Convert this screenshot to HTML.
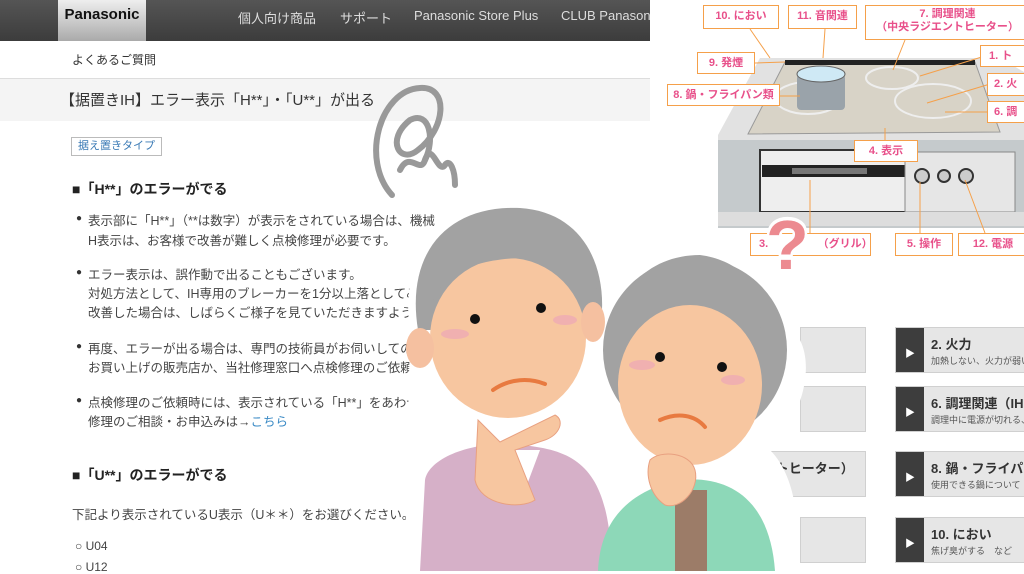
<!DOCTYPE html>
<html><head><meta charset="utf-8"><style>
*{margin:0;padding:0;box-sizing:border-box}
body{width:1024px;height:571px;overflow:hidden;background:#fff;font-family:"Liberation Sans","Noto Sans CJK JP",sans-serif;color:#333;position:relative}
.a{position:absolute;white-space:nowrap}
.hdr{left:0;top:0;width:650px;height:41px;background:linear-gradient(#555,#3c3c3c)}
.logo{left:58px;top:0;width:88px;height:41px;background:linear-gradient(#eee,#aaa);font-weight:bold;font-size:15px;color:#111;text-align:center;line-height:30px}
.nav{top:8px;font-size:13px;color:#ddd}
.band{left:0;top:78px;width:650px;height:43px;background:#f4f4f4;border-top:1px solid #ddd}
.b{font-size:12.5px;color:#444;left:88px}
.dot{left:76px;font-size:10px}
.lbl{position:absolute;border:1.5px solid #f5a04a;background:#fff;color:#e8508a;font-weight:bold;font-size:11px;text-align:center;white-space:nowrap;line-height:1.2;padding-top:4px;overflow:hidden}
.bx{position:absolute;background:#e6e6e6;border:1px solid #d0d0d0}
.dk{position:absolute;left:0;top:0;bottom:0;width:28px;background:#3d3d3d;color:#fff;font-size:10px;text-align:center;padding-top:17px}
.bt{position:absolute;left:35px;top:6px;font-weight:bold;font-size:13px;color:#333;white-space:nowrap}
.bs{position:absolute;left:35px;top:26px;font-size:9px;color:#555;white-space:nowrap}
</style></head><body>
<div class="a hdr"></div>
<div class="a logo">Panasonic</div>
<div class="a nav" style="left:238px">個人向け商品</div>
<div class="a nav" style="left:340px">サポート</div>
<div class="a nav" style="left:414px">Panasonic Store Plus</div>
<div class="a nav" style="left:561px">CLUB Panasonic</div>
<div class="a" style="left:72px;top:51px;font-size:12px;color:#333">よくあるご質問</div>
<div class="a band"></div>
<div class="a" style="left:60px;top:89px;font-size:15px;color:#333">【据置きIH】エラー表示「H**」・「U**」が出る</div>
<div class="a" style="left:71px;top:137px;width:91px;height:19px;border:1px solid #bbb;font-size:11px;color:#3a7ab5;text-align:center;line-height:17px">据え置きタイプ</div>
<div class="a" style="left:72px;top:179px;font-size:14px;font-weight:bold;color:#222">■「H**」のエラーがでる</div>
<div class="a dot" style="top:213px">●</div>
<div class="a b" style="top:210px">表示部に「H**」（**は数字）が表示をされている場合は、機械　　　　　　　　　　　　　　　　　　　ています。</div>
<div class="a b" style="top:230px">H表示は、お客様で改善が難しく点検修理が必要です。</div>
<div class="a dot" style="top:267px">●</div>
<div class="a b" style="top:264px">エラー表示は、誤作動で出ることもございます。</div>
<div class="a b" style="top:283px">対処方法として、IH専用のブレーカーを1分以上落としてみて</div>
<div class="a b" style="top:302px">改善した場合は、しばらくご様子を見ていただきますようお願</div>
<div class="a dot" style="top:341px">●</div>
<div class="a b" style="top:338px">再度、エラーが出る場合は、専門の技術員がお伺いしての点</div>
<div class="a b" style="top:357px">お買い上げの販売店か、当社修理窓口へ点検修理のご依頼を。</div>
<div class="a dot" style="top:395px">●</div>
<div class="a b" style="top:392px">点検修理のご依頼時には、表示されている「H**」をあわせてお伝え</div>
<div class="a b" style="top:411px">修理のご相談・お申込みは→<span style="color:#3a8ac5">こちら</span></div>
<div class="a" style="left:72px;top:465px;font-size:14px;font-weight:bold;color:#222">■「U**」のエラーがでる</div>
<div class="a" style="left:72px;top:504px;font-size:12.5px;color:#444">下記より表示されているU表示（U＊＊）をお選びください。</div>
<div class="a" style="left:75px;top:539px;font-size:12px;color:#444">○ U04</div>
<div class="a" style="left:75px;top:560px;font-size:12px;color:#444">○ U12</div>

<!-- right list -->
<div class="bx" style="left:800px;top:327px;width:66px;height:46px"></div>
<div class="bx" style="left:800px;top:386px;width:66px;height:46px"></div>
<div class="bx" style="left:700px;top:451px;width:166px;height:46px"><div class="bt" style="left:10px">央ラジエントヒーター）</div><div class="bs" style="left:12px">　　など</div></div>
<div class="bx" style="left:800px;top:517px;width:66px;height:46px"></div>
<div class="bx" style="left:895px;top:327px;width:140px;height:46px"><div class="dk">▶</div><div class="bt">2. 火力</div><div class="bs">加熱しない、火力が弱い</div></div>
<div class="bx" style="left:895px;top:386px;width:140px;height:46px"><div class="dk">▶</div><div class="bt">6. 調理関連（IH</div><div class="bs">調理中に電源が切れる、</div></div>
<div class="bx" style="left:895px;top:451px;width:140px;height:46px"><div class="dk">▶</div><div class="bt">8. 鍋・フライパ</div><div class="bs">使用できる鍋について</div></div>
<div class="bx" style="left:895px;top:517px;width:140px;height:46px"><div class="dk">▶</div><div class="bt">10. におい</div><div class="bs">焦げ臭がする　など</div></div>

<svg class="a" style="left:0;top:0" width="1024" height="571" viewBox="0 0 1024 571">
<!-- stove -->
<rect x="650" y="0" width="374" height="228" fill="#fff"/>
<polygon points="760,58 1000,58 1024,72 1024,140 718,140 718,135" fill="#e2e2e2"/>
<polygon points="785,62 975,62 1000,132 748,134" fill="#d8d3c7" stroke="#999"/>
<rect x="785" y="60" width="190" height="5" fill="#222"/>
<ellipse cx="808" cy="98" rx="33" ry="16" fill="none" stroke="#eee" stroke-width="2"/>
<ellipse cx="892" cy="78" rx="26" ry="11" fill="none" stroke="#eee" stroke-width="2"/>
<ellipse cx="933" cy="101" rx="38" ry="17" fill="none" stroke="#eee" stroke-width="2"/>
<rect x="718" y="140" width="306" height="88" fill="#c5cacc"/>
<rect x="760" y="150" width="150" height="62" fill="#eee" stroke="#333" stroke-width="2"/>
<rect x="762" y="165" width="145" height="12" fill="#222"/>
<rect x="792" y="168" width="75" height="6" fill="#777"/>
<rect x="905" y="152" width="110" height="60" fill="#e6e6e6" stroke="#888"/>
<circle cx="922" cy="176" r="7" fill="#ccc" stroke="#333" stroke-width="2"/>
<circle cx="944" cy="176" r="6" fill="#ccc" stroke="#333" stroke-width="2"/>
<circle cx="966" cy="176" r="7" fill="#ccc" stroke="#333" stroke-width="2"/>
<rect x="718" y="212" width="306" height="14" fill="#ddd"/>
<!-- pot -->
<rect x="797" y="74" width="48" height="36" rx="4" fill="#9aa3aa"/>
<ellipse cx="821" cy="74" rx="24" ry="8" fill="#cfe9f5" stroke="#666"/>
<!-- leader lines -->
<g stroke="#f5a04a" stroke-width="1" fill="none">
<path d="M750 29 L770 58 M825 29 L823 58 M905 40 L893 70 M755 63 L785 62 M780 96 L800 96 M985 56 L920 76 M990 84 L927 103 M990 112 L945 112 M885 140 L885 128 M810 233 L810 180 M920 233 L920 182 M985 233 L965 180"/>
</g>
<!-- question mark -->
<text x="766" y="268" font-size="70" font-weight="bold" fill="#ec8a90" stroke="#fff" stroke-width="5" paint-order="stroke" font-family="Liberation Sans,sans-serif">?</text>
<!-- scribble -->
<g fill="none" stroke="#999" stroke-width="6" stroke-linecap="round">
<path d="M392 195 C360 160 380 90 420 88 C450 86 445 130 418 150 C400 165 385 140 410 120 C430 110 435 140 425 160"/>
<path d="M400 170 C410 150 420 175 425 160 C432 140 438 175 445 165 C450 158 455 170 455 185"/>
</g>
<!-- white outlines -->
<path d="M405 560 L410 330 C400 270 430 200 510 198 C580 196 620 240 612 300 L640 270 C700 230 790 250 800 340 C815 370 800 420 770 450 C800 480 800 540 795 571 L400 571Z" fill="#fff"/>
<!-- man -->
<path d="M420 571 L425 480 C430 455 480 440 520 445 C580 450 610 470 612 571Z" fill="#d6b0c8"/>
<path d="M500 450 L525 490 L540 450Z" fill="#fff"/>
<path d="M418 330 C405 250 450 205 520 208 C585 212 610 270 600 330Z" fill="#a2a2a2"/>
<ellipse cx="508" cy="338" rx="78" ry="80" fill="#f7c6a0"/>
<path d="M430 310 C440 270 480 255 550 258 C575 270 590 290 592 315 L598 280 C590 230 550 210 510 210 C460 212 420 250 430 310Z" fill="#a2a2a2"/>
<ellipse cx="420" cy="348" rx="14" ry="20" fill="#f5c0a0"/>
<ellipse cx="593" cy="322" rx="12" ry="20" fill="#f5c0a0"/>
<circle cx="475" cy="319" r="5" fill="#111"/><circle cx="541" cy="308" r="5" fill="#111"/>
<ellipse cx="455" cy="334" rx="14" ry="5" fill="#f0b0b0"/><ellipse cx="565" cy="320" rx="12" ry="5" fill="#f0b0b0"/>
<path d="M493 390 C510 378 530 378 545 384" stroke="#e87a40" stroke-width="4" fill="none" stroke-linecap="round"/>
<path d="M478 420 L500 442 L555 415 C565 420 560 435 545 440 L515 450 L535 500 C520 510 480 505 475 480Z" fill="#f7c6a0" stroke="#e8a080"/>
<!-- woman -->
<path d="M598 571 C600 520 630 490 680 480 C730 475 770 500 775 571Z" fill="#8dd8b8"/>
<rect x="675" y="490" width="32" height="81" fill="#9c7c68"/>
<circle cx="695" cy="350" r="92" fill="#a2a2a2"/>
<ellipse cx="690" cy="385" rx="72" ry="80" fill="#f7c6a0"/>
<path d="M610 340 C630 290 700 270 740 300 L760 330 C770 290 740 260 700 255 C650 255 615 290 610 340Z" fill="#a2a2a2"/>
<circle cx="660" cy="357" r="5" fill="#111"/><circle cx="722" cy="367" r="5" fill="#111"/>
<ellipse cx="642" cy="365" rx="13" ry="5" fill="#f0b0b0"/><ellipse cx="733" cy="380" rx="12" ry="5" fill="#f0b0b0"/>
<path d="M660 420 C678 412 695 415 705 427" stroke="#e87a40" stroke-width="4" fill="none" stroke-linecap="round"/>
<path d="M650 460 C660 450 690 452 695 470 C700 490 680 510 665 505 C650 495 645 475 650 460Z" fill="#f7c6a0" stroke="#e8a080"/>
</svg>

<div class="lbl" style="left:703px;top:5px;width:76px;height:24px">10. におい</div>
<div class="lbl" style="left:788px;top:5px;width:69px;height:24px">11. 音関連</div>
<div class="lbl" style="left:865px;top:5px;width:165px;height:35px;padding-top:2px">7. 調理関連<br>（中央ラジエントヒーター）</div>
<div class="lbl" style="left:697px;top:52px;width:58px;height:22px">9. 発煙</div>
<div class="lbl" style="left:667px;top:84px;width:113px;height:22px">8. 鍋・フライパン類</div>
<div class="lbl" style="left:980px;top:45px;width:50px;height:22px;text-align:left;padding-left:8px">1. ト</div>
<div class="lbl" style="left:987px;top:73px;width:43px;height:23px;text-align:left;padding-left:6px">2. 火</div>
<div class="lbl" style="left:987px;top:101px;width:43px;height:22px;text-align:left;padding-left:6px">6. 調</div>
<div class="lbl" style="left:854px;top:140px;width:64px;height:22px">4. 表示</div>
<div class="lbl" style="left:750px;top:233px;width:121px;height:23px;text-align:left;padding-left:8px">3.　　　　　（グリル）</div>
<div class="lbl" style="left:895px;top:233px;width:58px;height:23px">5. 操作</div>
<div class="lbl" style="left:958px;top:233px;width:70px;height:23px">12. 電源</div>
<svg class="a" style="left:760px;top:195px" width="60" height="80"><text x="6" y="74" font-size="70" font-weight="bold" fill="#ec8a90" stroke="#fff" stroke-width="5" paint-order="stroke" font-family="Liberation Sans,sans-serif">?</text></svg>
</body></html>
